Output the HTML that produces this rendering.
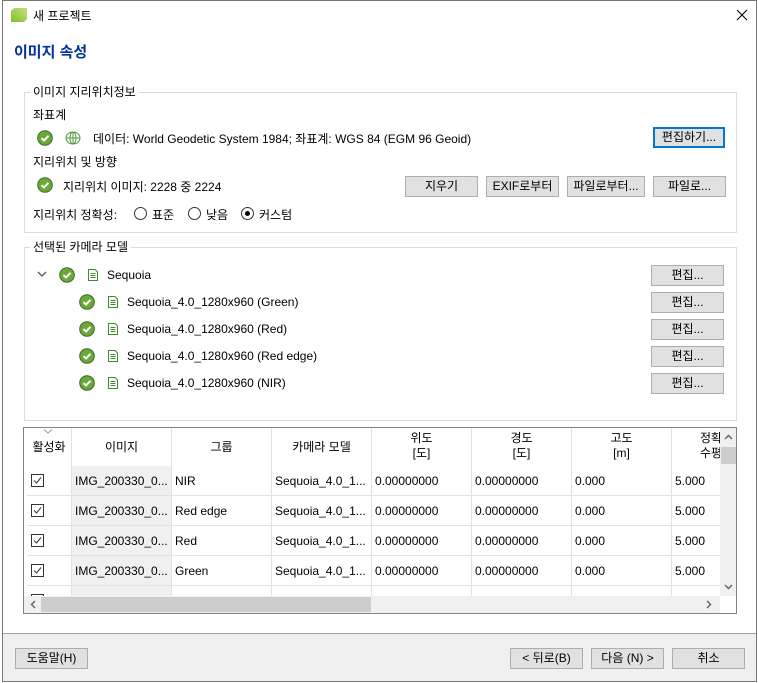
<!DOCTYPE html>
<html><head><meta charset="utf-8">
<style>
*{box-sizing:border-box;margin:0;padding:0}
body{width:758px;height:683px;overflow:hidden;background:#fff;font-family:"Liberation Sans","Noto Sans CJK KR","NanumGothic",sans-serif;font-size:12px;color:#000;position:relative}
.a{position:absolute;white-space:nowrap}
.win{position:absolute;left:2px;top:0;width:755px;height:682px;border:1px solid #777}
.grp{position:absolute;border:1px solid #dcdcdc}
.lg{position:absolute;background:#fff;padding:0 3px;top:-8px;left:5px;font-size:12px;line-height:14px}
.btn{position:absolute;background:#e1e1e1;border:1px solid #adadad;text-align:center;font-size:12px;line-height:18px;height:21px}
.ck{position:absolute;width:16px;height:16px}
.doc{position:absolute;width:10px;height:12px}
.cell{position:absolute;height:30px;line-height:30px;padding-left:3px;border-right:1px solid #e2e2e2;border-bottom:1px solid #e2e2e2;overflow:hidden}
.hd{position:absolute;text-align:center;border-right:1px solid #e2e2e2;line-height:15px;padding-top:3px;height:38px}
.cb{position:absolute;width:13px;height:13px;border:1px solid #333;background:#fff}
.rad{position:absolute;width:13px;height:13px;border:1px solid #333;border-radius:50%}
</style></head><body>
<div class="win"></div>
<svg class="a" style="left:11px;top:8px" width="16" height="14"><defs><linearGradient id="g" x1="0" y1="1" x2="1" y2="0"><stop offset="0" stop-color="#7cc22b"/><stop offset="1" stop-color="#c6e07a"/></linearGradient></defs><path d="M3 0H16V11L13 14H0V3Z" fill="url(#g)"/></svg>
<div class="a" style="left:33px;top:7px;font-size:12px">새 프로젝트</div>
<svg class="a" style="left:736px;top:9px" width="12" height="12"><path d="M1 1L11 11M11 1L1 11" stroke="#000" stroke-width="1.1"/></svg>
<div class="a" style="left:14px;top:41px;font-size:15px;color:#003399;font-weight:bold">이미지 속성</div>

<div class="grp" style="left:24px;top:92px;width:713px;height:141px"><div class="lg">이미지 지리위치정보</div></div>
<div class="a" style="left:33px;top:106px">좌표계</div>
<svg class="ck" style="left:37px;top:130px" viewBox="0 0 16 16"><circle cx="8" cy="8" r="7.3" fill="#6aa83a" stroke="#3d6b22"/><path d="M4.5 8.2L7 10.5L11.5 5.8" stroke="#fff" stroke-width="2" fill="none"/></svg>
<svg class="a" style="left:65px;top:131px" width="16" height="14" viewBox="0 0 16 14"><ellipse cx="8" cy="7" rx="7" ry="6" fill="none" stroke="#4a9a3a"/><ellipse cx="8" cy="7" rx="3" ry="6" fill="none" stroke="#4a9a3a"/><path d="M1 7H15M8 1V13" stroke="#4a9a3a"/></svg>
<div class="a" style="left:93px;top:130px">데이터: World Geodetic System 1984; 좌표계: WGS 84 (EGM 96 Geoid)</div>
<div class="btn" style="left:653px;top:127px;width:72px;border:2px solid #0078d7;line-height:16px">편집하기...</div>
<div class="a" style="left:33px;top:153px">지리위치 및 방향</div>
<svg class="ck" style="left:37px;top:177px" viewBox="0 0 16 16"><circle cx="8" cy="8" r="7.3" fill="#6aa83a" stroke="#3d6b22"/><path d="M4.5 8.2L7 10.5L11.5 5.8" stroke="#fff" stroke-width="2" fill="none"/></svg>
<div class="a" style="left:63px;top:178px">지리위치 이미지: 2228 중 2224</div>
<div class="btn" style="left:405px;top:176px;width:73px">지우기</div>
<div class="btn" style="left:486px;top:176px;width:73px">EXIF로부터</div>
<div class="btn" style="left:567px;top:176px;width:78px">파일로부터...</div>
<div class="btn" style="left:653px;top:176px;width:73px">파일로...</div>
<div class="a" style="left:33px;top:206px">지리위치 정확성:</div>
<div class="rad" style="left:134px;top:207px"></div><div class="a" style="left:152px;top:206px">표준</div>
<div class="rad" style="left:188px;top:207px"></div><div class="a" style="left:206px;top:206px">낮음</div>
<div class="rad" style="left:241px;top:207px"><span style="position:absolute;left:3px;top:3px;width:5px;height:5px;border-radius:50%;background:#000"></span></div><div class="a" style="left:259px;top:206px">커스텀</div>

<div class="grp" style="left:24px;top:247px;width:713px;height:174px"><div class="lg">선택된 카메라 모델</div></div>
<svg class="a" style="left:37px;top:271px" width="10" height="7"><path d="M1 1L5 5L9 1" stroke="#555" fill="none" stroke-width="1.3"/></svg>
<svg class="ck" style="left:59px;top:267px" viewBox="0 0 16 16"><circle cx="8" cy="8" r="7.3" fill="#6aa83a" stroke="#3d6b22"/><path d="M4.5 8.2L7 10.5L11.5 5.8" stroke="#fff" stroke-width="2" fill="none"/></svg>
<svg class="doc" style="left:88px;top:269px" viewBox="0 0 10 12"><path d="M.5 .5H7L9.5 3V11.5H.5Z M2.5 4.5H7.5M2.5 6.5H7.5M2.5 8.5H7.5" fill="none" stroke="#3f8a2e"/></svg>
<div class="a" style="left:107px;top:268px">Sequoia</div>
<div class="btn" style="left:651px;top:265px;width:73px">편집...</div>

<svg class="ck" style="left:79px;top:294px" viewBox="0 0 16 16"><circle cx="8" cy="8" r="7.3" fill="#6aa83a" stroke="#3d6b22"/><path d="M4.5 8.2L7 10.5L11.5 5.8" stroke="#fff" stroke-width="2" fill="none"/></svg>
<svg class="doc" style="left:108px;top:296px" viewBox="0 0 10 12"><path d="M.5 .5H7L9.5 3V11.5H.5Z M2.5 4.5H7.5M2.5 6.5H7.5M2.5 8.5H7.5" fill="none" stroke="#3f8a2e"/></svg>
<div class="a" style="left:127px;top:295px">Sequoia_4.0_1280x960 (Green)</div>
<div class="btn" style="left:651px;top:292px;width:73px">편집...</div>

<svg class="ck" style="left:79px;top:321px" viewBox="0 0 16 16"><circle cx="8" cy="8" r="7.3" fill="#6aa83a" stroke="#3d6b22"/><path d="M4.5 8.2L7 10.5L11.5 5.8" stroke="#fff" stroke-width="2" fill="none"/></svg>
<svg class="doc" style="left:108px;top:323px" viewBox="0 0 10 12"><path d="M.5 .5H7L9.5 3V11.5H.5Z M2.5 4.5H7.5M2.5 6.5H7.5M2.5 8.5H7.5" fill="none" stroke="#3f8a2e"/></svg>
<div class="a" style="left:127px;top:322px">Sequoia_4.0_1280x960 (Red)</div>
<div class="btn" style="left:651px;top:319px;width:73px">편집...</div>

<svg class="ck" style="left:79px;top:348px" viewBox="0 0 16 16"><circle cx="8" cy="8" r="7.3" fill="#6aa83a" stroke="#3d6b22"/><path d="M4.5 8.2L7 10.5L11.5 5.8" stroke="#fff" stroke-width="2" fill="none"/></svg>
<svg class="doc" style="left:108px;top:350px" viewBox="0 0 10 12"><path d="M.5 .5H7L9.5 3V11.5H.5Z M2.5 4.5H7.5M2.5 6.5H7.5M2.5 8.5H7.5" fill="none" stroke="#3f8a2e"/></svg>
<div class="a" style="left:127px;top:349px">Sequoia_4.0_1280x960 (Red edge)</div>
<div class="btn" style="left:651px;top:346px;width:73px">편집...</div>

<svg class="ck" style="left:79px;top:375px" viewBox="0 0 16 16"><circle cx="8" cy="8" r="7.3" fill="#6aa83a" stroke="#3d6b22"/><path d="M4.5 8.2L7 10.5L11.5 5.8" stroke="#fff" stroke-width="2" fill="none"/></svg>
<svg class="doc" style="left:108px;top:377px" viewBox="0 0 10 12"><path d="M.5 .5H7L9.5 3V11.5H.5Z M2.5 4.5H7.5M2.5 6.5H7.5M2.5 8.5H7.5" fill="none" stroke="#3f8a2e"/></svg>
<div class="a" style="left:127px;top:376px">Sequoia_4.0_1280x960 (NIR)</div>
<div class="btn" style="left:651px;top:373px;width:73px">편집...</div>

<div style="position:absolute;left:23px;top:427px;width:714px;height:187px;border:1px solid #828282;overflow:hidden">
 <div style="position:absolute;left:3px;top:0;width:694px;height:168px;overflow:hidden">
  <div class="hd" style="left:0;width:45px;padding-top:12px">활성화</div>
  <svg class="a" style="left:16px;top:1px" width="10" height="5"><path d="M1 .5L5 4L9 .5" stroke="#999" fill="none"/></svg>
  <div class="hd" style="left:45px;width:100px;padding-top:12px">이미지</div>
  <div class="hd" style="left:145px;width:100px;padding-top:12px">그룹</div>
  <div class="hd" style="left:245px;width:100px;padding-top:12px">카메라 모델</div>
  <div class="hd" style="left:345px;width:100px">위도<br>[도]</div>
  <div class="hd" style="left:445px;width:100px">경도<br>[도]</div>
  <div class="hd" style="left:545px;width:100px">고도<br>[m]</div>
  <div class="hd" style="left:645px;width:100px;text-align:left;padding-left:28px">정확<br>수평</div>
  <div id="rows"></div>
 </div>
 <div style="position:absolute;left:696px;top:0;width:17px;height:168px;background:#f0f0f0"></div>
 <div style="position:absolute;left:697px;top:19px;width:15px;height:17px;background:#cdcdcd"></div>
 <svg class="a" style="left:700px;top:6px" width="9" height="6"><path d="M1 5L4.5 1.5L8 5" stroke="#606060" fill="none" stroke-width="1.4"/></svg>
 <svg class="a" style="left:700px;top:156px" width="9" height="6"><path d="M1 1L4.5 4.5L8 1" stroke="#606060" fill="none" stroke-width="1.4"/></svg>
 <div style="position:absolute;left:0;top:168px;width:696px;height:17px;background:#f0f0f0"></div>
 <div style="position:absolute;left:17px;top:169px;width:330px;height:15px;background:#cdcdcd"></div>
 <svg class="a" style="left:6px;top:172px" width="6" height="9"><path d="M5 1L1.5 4.5L5 8" stroke="#606060" fill="none" stroke-width="1.4"/></svg>
 <svg class="a" style="left:682px;top:172px" width="6" height="9"><path d="M1 1L4.5 4.5L1 8" stroke="#606060" fill="none" stroke-width="1.4"/></svg>
</div>
<script>
var g=["NIR","Red edge","Red","Green",""],h="";
for(var i=0;i<5;i++){var t=38+i*30,e=i==4?"":1;
h+='<div class="cell" style="left:0;top:'+t+'px;width:45px"></div>';
if(i<4)h+='<div class="cb" style="left:4px;top:'+(t+8)+'px"><svg width="11" height="11" style="position:absolute;left:0;top:0"><path d="M2 5.5L4.5 8L9 2.5" stroke="#333" fill="none"/></svg></div>';
else h+='<div class="cb" style="left:4px;top:'+(t+8)+'px"></div>';
h+='<div class="cell" style="left:45px;top:'+t+'px;width:100px;background:#f0f0f0">'+(e?'IMG_200330_0...':'')+'</div>';
h+='<div class="cell" style="left:145px;top:'+t+'px;width:100px">'+g[i]+'</div>';
h+='<div class="cell" style="left:245px;top:'+t+'px;width:100px">'+(e?'Sequoia_4.0_1...':'')+'</div>';
h+='<div class="cell" style="left:345px;top:'+t+'px;width:100px">'+(e?'0.00000000':'')+'</div>';
h+='<div class="cell" style="left:445px;top:'+t+'px;width:100px">'+(e?'0.00000000':'')+'</div>';
h+='<div class="cell" style="left:545px;top:'+t+'px;width:100px">'+(e?'0.000':'')+'</div>';
h+='<div class="cell" style="left:645px;top:'+t+'px;width:100px">'+(e?'5.000':'')+'</div>';}
document.getElementById('rows').outerHTML=h;
</script>

<div style="position:absolute;left:3px;top:633px;width:753px;height:48px;background:#f0f0f0;border-top:1px solid #a0a0a0"></div>
<div class="btn" style="left:15px;top:648px;width:73px">도움말(H)</div>
<div class="btn" style="left:510px;top:648px;width:73px">&lt; 뒤로(B)</div>
<div class="btn" style="left:591px;top:648px;width:73px">다음 (N) &gt;</div>
<div class="btn" style="left:672px;top:648px;width:73px">취소</div>
</body></html>
